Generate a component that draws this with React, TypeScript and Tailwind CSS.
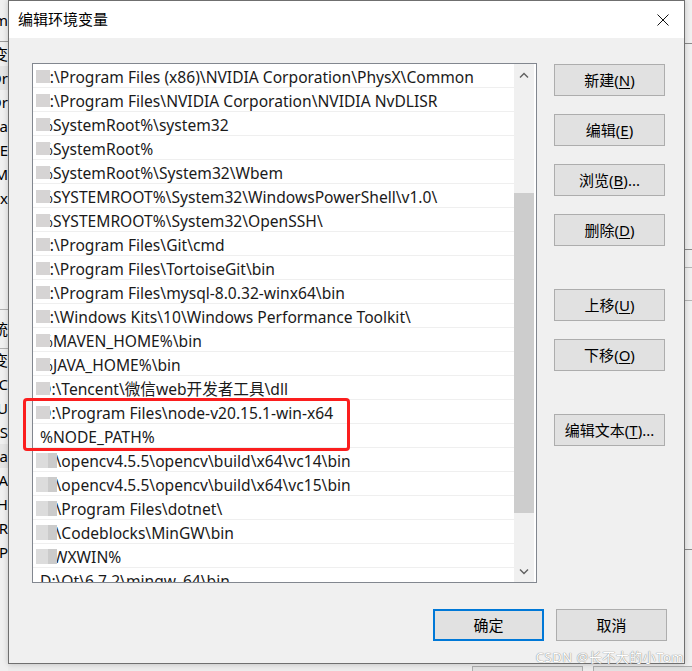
import React from 'react'

type Row = { text: string; blur?: 'short' | 'wide' }

const rows: Row[] = [
    { text: 'C:\\Program Files (x86)\\NVIDIA Corporation\\PhysX\\Common', blur: 'short' },
    { text: 'C:\\Program Files\\NVIDIA Corporation\\NVIDIA NvDLISR', blur: 'short' },
    { text: '%SystemRoot%\\system32', blur: 'short' },
    { text: '%SystemRoot%', blur: 'short' },
    { text: '%SystemRoot%\\System32\\Wbem', blur: 'short' },
    { text: '%SYSTEMROOT%\\System32\\WindowsPowerShell\\v1.0\\', blur: 'short' },
    { text: '%SYSTEMROOT%\\System32\\OpenSSH\\', blur: 'short' },
    { text: 'C:\\Program Files\\Git\\cmd', blur: 'short' },
    { text: 'C:\\Program Files\\TortoiseGit\\bin', blur: 'short' },
    { text: 'C:\\Program Files\\mysql-8.0.32-winx64\\bin', blur: 'short' },
    { text: 'C:\\Windows Kits\\10\\Windows Performance Toolkit\\', blur: 'short' },
    { text: '%MAVEN_HOME%\\bin', blur: 'short' },
    { text: '%JAVA_HOME%\\bin', blur: 'short' },
    { text: 'D:\\Tencent\\微信web开发者工具\\dll', blur: 'short' },
    { text: 'D:\\Program Files\\node-v20.15.1-win-x64', blur: 'short' },
    { text: '%NODE_PATH%' },
    { text: 'D:\\opencv4.5.5\\opencv\\build\\x64\\vc14\\bin', blur: 'wide' },
    { text: 'D:\\opencv4.5.5\\opencv\\build\\x64\\vc15\\bin', blur: 'wide' },
    { text: 'D:\\Program Files\\dotnet\\', blur: 'wide' },
    { text: 'D:\\Codeblocks\\MinGW\\bin', blur: 'wide' },
    { text: '%WXWIN%', blur: 'wide' },
    { text: 'D:\\Qt\\6.7.2\\mingw_64\\bin' },
]

// letters of the window behind the dialog, peeking out on the left
const behindLeft = [
    { y: 'h-[42px]', t: 'System Program' },
    { y: 'h-[24px]', t: '用户变' },
    { y: 'h-[24px]', t: 'Or' },
    { y: 'h-[24px]', t: 'Or' },
    { y: 'h-[24px]', t: 'Pa' },
    { y: 'h-[24px]', t: 'TE' },
    { y: 'h-[24px]', t: 'TM' },
    { y: 'h-[24px]', t: 'wx' },
]

function Btn({ label, k, tail = '', className = '' }: { label: string; k: string; tail?: string; className?: string }) {
    return (
        <button
            className={`h-[32px] w-[111px] border border-[#adadad] bg-[#e1e1e1] text-[15px] text-black flex items-center justify-center ${className}`}
        >
            {label}(<span className="underline underline-offset-2">{k}</span>){tail}
        </button>
    )
}

export default function App() {
    return (
        <div
            className="relative w-[692px] h-[671px] overflow-hidden bg-[#ececec]"
            style={{ fontFamily: '"Noto Sans", "Noto Sans CJK SC", sans-serif' }}
        >
            {/* window behind, left edge */}
            <div className="absolute left-0 top-0 w-[8px] h-[671px] bg-[#f0f0f0] flex flex-col">
                {behindLeft.map((l, i) => (
                    <div key={i} className={`${l.y} flex items-center justify-end overflow-hidden whitespace-nowrap text-[15px] text-black ${i === 2 ? 'bg-[#e5e5e5]' : ''} ${i === 0 ? 'border-b border-[#9a9a9a]' : ''}`}>
                        {l.t}
                    </div>
                ))}
                <div className="h-[30px]" />
                <div className="h-[70px] border-b border-[#b0b0b0]" />
                <div className="h-[38px] flex items-center justify-end overflow-hidden whitespace-nowrap text-[15px]">系统</div>
                <div className="h-[24px] border-t border-[#b0b0b0] flex items-center justify-end overflow-hidden whitespace-nowrap text-[15px]">变</div>
                {['IC', 'IU', 'OS', 'Pa', 'TA', 'TH', 'TR', 'P'].map((t, i) => (
                    <div key={i} className={`h-[24px] flex items-center justify-end overflow-hidden whitespace-nowrap text-[15px] ${i === 3 ? 'bg-[#e5e5e5]' : ''}`}>
                        {t}
                    </div>
                ))}
            </div>

            {/* window behind, right edge */}
            <div className="absolute right-0 top-0 w-[8px] h-[671px] bg-[#f0f0f0] flex flex-col">
                <div className="h-[44px] border-b border-[#8a8a8a]" />
                <div className="h-[206px] border-b border-[#8a8a8a]" />
                <div className="h-[18px] border-b border-[#b5b5b5]" />
                <div className="h-[33px] border-b border-[#b5b5b5]" />
                <div className="h-[18px]" />
                <div className="h-[231px] border-b border-[#8a8a8a]" />
            </div>

            {/* window behind, bottom strip */}
            <div className="absolute left-[472px] top-[666px] w-[111px] h-[10px] border border-[#adadad] bg-[#e1e1e1]" />
            <div className="absolute left-[593px] top-[666px] w-[111px] h-[10px] border border-[#adadad] bg-[#e1e1e1]" />

            {/* dialog */}
            <div className="absolute left-[8px] top-0 w-[677px] h-[664px] border border-[#6f6f6f] bg-[#f0f0f0] flex flex-col shadow-[0_0_6px_rgba(0,0,0,0.2)]">
                <div className="h-[37px] bg-white flex items-center justify-between pl-[9px] pr-[14px]">
                    <span className="text-[15px] text-black">编辑环境变量</span>
                    <svg width="12" height="12" viewBox="0 0 12 12" className="mr-[1px]">
                        <path d="M0.5 0.5 L11.5 11.5 M11.5 0.5 L0.5 11.5" stroke="#111" strokeWidth="1" />
                    </svg>
                </div>

                <div className="flex flex-col flex-1 pl-[23px] pt-[25px]">
                    <div className="flex">
                        {/* list box */}
                        <div className="w-[505px] h-[520px] border border-[#82878f] bg-white flex overflow-hidden">
                            <div className="flex-1 flex flex-col overflow-hidden">
                                {rows.map((r, i) => (
                                    <div
                                        key={i}
                                        className="relative h-[24px] shrink-0 border-b border-[#efefef] pl-[7px] pt-[5px] flex items-center whitespace-nowrap text-[15.6px] text-[#1a1a1a]"
                                    >
                                        {r.text}
                                        {r.blur === 'short' && (
                                            <span className="absolute left-[3px] top-[6px] w-[14px] h-[13px] bg-[#d6d4d4] blur-[0.6px]" />
                                        )}
                                        {r.blur === 'wide' && (
                                            <span className="absolute left-[3px] top-[5px] h-[15px] flex blur-[0.6px]">
                                                <span className="w-[12px] bg-[#dcdcdc]" />
                                                <span className="w-[9px] bg-[#cbcbcb]" />
                                            </span>
                                        )}
                                    </div>
                                ))}
                            </div>
                            {/* scrollbar */}
                            <div className="w-[20px] mr-[2px] bg-[#f0f0f0] flex flex-col">
                                <div className="h-[21px] flex items-center justify-center">
                                    <svg width="10" height="6" viewBox="0 0 10 6">
                                        <path d="M1 5.5 L5 1.5 L9 5.5" stroke="#606060" strokeWidth="1.4" fill="none" />
                                    </svg>
                                </div>
                                <div className="h-[108px]" />
                                <div className="h-[320px] bg-[#cdcdcd]" />
                                <div className="flex-1" />
                                <div className="h-[21px] flex items-center justify-center">
                                    <svg width="10" height="6" viewBox="0 0 10 6">
                                        <path d="M1 0.5 L5 4.5 L9 0.5" stroke="#606060" strokeWidth="1.4" fill="none" />
                                    </svg>
                                </div>
                            </div>
                        </div>

                        {/* right buttons */}
                        <div className="ml-[17px] pt-[1px] flex flex-col">
                            <Btn label="新建" k="N" />
                            <Btn label="编辑" k="E" className="mt-[18px]" />
                            <Btn label="浏览" k="B" tail="..." className="mt-[18px]" />
                            <Btn label="删除" k="D" className="mt-[18px]" />
                            <Btn label="上移" k="U" className="mt-[43px]" />
                            <Btn label="下移" k="O" className="mt-[18px]" />
                            <Btn label="编辑文本" k="T" tail="..." className="mt-[43px]" />
                        </div>
                    </div>

                    <div className="flex justify-end gap-[12px] pr-[17px] mt-[26px]">
                        <button className="h-[32px] w-[111px] border-2 border-[#0078d7] bg-[#e1e1e1] text-[15px] text-black">确定</button>
                        <button className="h-[32px] w-[111px] border border-[#adadad] bg-[#e1e1e1] text-[15px] text-black">取消</button>
                    </div>
                </div>
            </div>

            {/* red highlight */}
            <div className="absolute left-[23px] top-[398px] w-[327px] h-[53px] border-[3px] border-[#fb1e1e] rounded-[4px]" />

            {/* watermark */}
            <div
                className="absolute right-[8px] top-[648px] text-[13px] text-white tracking-[0.5px]"
                style={{ textShadow: '0 0 1px #8a8a8a, 0 0 1px #8a8a8a' }}
            >
                CSDN @长不大的小Tom
            </div>
        </div>
    )
}
